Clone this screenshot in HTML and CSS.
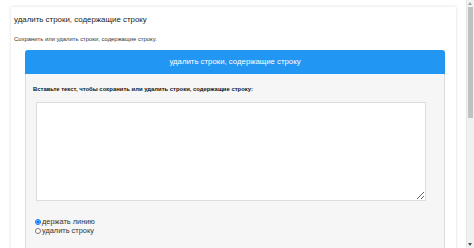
FILE: index.html
```html
<!DOCTYPE html>
<html lang="ru">
<head>
<meta charset="utf-8">
<title>удалить строки, содержащие строку</title>
<link rel="stylesheet" href="styles.css">
</head>
<body>
<div class="page">
  <div class="card">
    <h1 class="title">удалить строки, содержащие строку</h1>
    <p class="subtitle">Сохранить или удалить строки, содержащие строку.</p>
    <div class="tool">
      <div class="tool-head">удалить строки, содержащие строку</div>
      <div class="tool-body">
        <label class="label" for="src">Вставьте текст, чтобы сохранить или удалить строки, содержащие строку:</label>
        <textarea id="src" class="input"></textarea>
        <div class="options">
          <label class="opt"><input type="radio" name="mode" checked> держать линию</label>
          <label class="opt"><input type="radio" name="mode"> удалить строку</label>
        </div>
      </div>
    </div>
  </div>
</div>
<div class="scrollbar">
  <span class="arrow up"></span>
  <span class="thumb"></span>
  <span class="arrow down"></span>
</div>
</body>
</html>
```
FILE: styles.css
```css
html, body {
  height: 100%;
  overflow: hidden;
}
body {
  margin: 0;
  background: #ffffff;
  font-family: "Liberation Sans", Arial, sans-serif;
  color: #333333;
}
.page {
  padding: 7px 18px 0 11px;
}
.card {
  background: #ffffff;
  box-shadow: 0 0 3px rgba(0, 0, 0, 0.15);
  padding: 8px 11px 0 3px;
  height: 300px;
}
.title {
  margin: 0;
  font-size: 7.9px;
  font-weight: normal;
  line-height: 10px;
  color: #222222;
}
.subtitle {
  margin: 10px 0 0 0;
  font-size: 5.9px;
  line-height: 8px;
  color: #333333;
}
.tool {
  margin: 7px 0 0 11px;
  border: 1px solid #dddddd;
  border-radius: 3px 3px 0 0;
  background: #f6f6f6;
}
.tool-head {
  background: #2196f3;
  color: #ffffff;
  border-radius: 3px 3px 0 0;
  height: 24px;
  line-height: 24px;
  text-align: center;
  font-size: 7.8px;
  margin: -1px -1px 0 -1px;
}
.tool-body {
  padding: 11px 8px 20px 7px;
  display: flex;
  flex-direction: column;
  align-items: flex-start;
}
.label {
  font-size: 5.9px;
  font-weight: bold;
  line-height: 8px;
  color: #111111;
}
.input {
  margin: 9px 0 0 3px;
  width: 390px;
  height: 99px;
  box-sizing: border-box;
  border: 1px solid #dddddd;
  background: #ffffff;
  padding: 4px;
  font: inherit;
}
.options {
  margin: 16px 0 0 2px;
  display: flex;
  flex-direction: column;
}
.opt {
  display: flex;
  align-items: center;
  font-size: 7.4px;
  line-height: 9px;
  color: #333333;
}
.opt input {
  margin: 0 1px 0 0;
  width: 6px;
  height: 6px;
}
.scrollbar {
  position: fixed;
  top: 0;
  right: 0;
  bottom: 0;
  width: 7px;
  background: #f1f1f1;
  border-left: 1px solid #e6e6e6;
}
.thumb {
  position: absolute;
  left: 1px;
  right: 1px;
  top: 7px;
  height: 111px;
  background: #c1c1c1;
}
.arrow {
  position: absolute;
  left: 1px;
  width: 0;
  height: 0;
  border-left: 2.5px solid transparent;
  border-right: 2.5px solid transparent;
}
.arrow.up {
  top: 2px;
  border-bottom: 3px solid #a3a3a3;
}
.arrow.down {
  bottom: 2px;
  border-top: 3px solid #505050;
}
```
